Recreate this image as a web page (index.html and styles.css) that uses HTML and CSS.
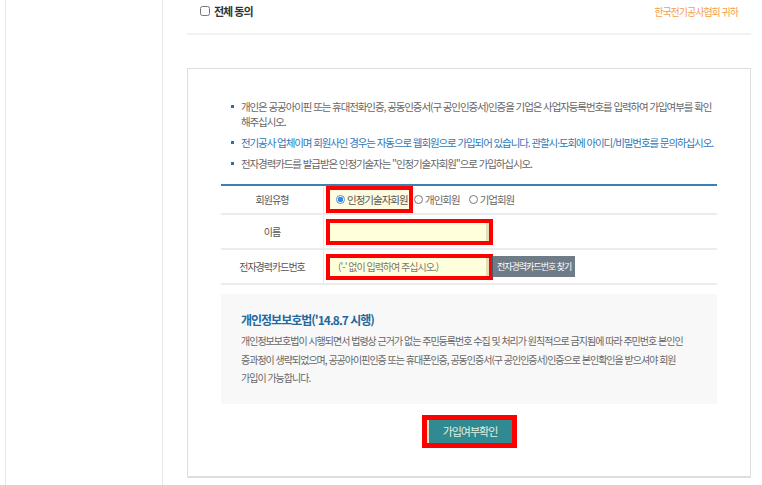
FILE: index.html
```html
<!DOCTYPE html>
<html lang="ko">

<head>
    <meta charset="UTF-8">
    <meta name="viewport" content="width=device-width, initial-scale=1.0">
    <title>가입여부확인</title>
    <link rel="stylesheet" href="styles.css">
</head>

<body>
    <div class="page">
        <div class="sidebar"></div>
        <div class="main">
            <div class="agree-row">
                <label class="agree-all"><input type="checkbox"> 전체 동의</label>
                <span class="to">한국전기공사협회 귀하</span>
            </div>

            <div class="box">
                <ul class="notice">
                    <li>개인은 공공아이핀 또는 휴대전화인증, 공동인증서(구 공인인증서)인증을 기업은 사업자등록번호를 입력하여 가입여부를 확인<br>해주십시오.</li>
                    <li class="blue">전기공사 업체이며 회원사인 경우는 자동으로 웹회원으로 가입되어 있습니다. 관할시·도회에 아이디/비밀번호를 문의하십시오.</li>
                    <li>전자경력카드를 발급받은 인정기술자는 "인정기술자회원"으로 가입하십시오.</li>
                </ul>

                <table class="form-table">
                    <tr class="row-type">
                        <th>회원유형</th>
                        <td>
                            <div class="radios">
                                <label class="radio mark checked"><span class="dot"></span>인정기술자회원</label>
                                <label class="radio"><span class="dot"></span>개인회원</label>
                                <label class="radio"><span class="dot"></span>기업회원</label>
                            </div>
                        </td>
                    </tr>
                    <tr>
                        <th>이름</th>
                        <td>
                            <div class="mark field"><input type="text" class="input"></div>
                        </td>
                    </tr>
                    <tr>
                        <th>전자경력카드번호</th>
                        <td>
                            <div class="with-btn">
                                <div class="mark field"><input type="text" class="input" placeholder="('-' 없이 입력하여 주십시오.)"></div>
                                <button class="btn-find">전자경력카드번호 찾기</button>
                            </div>
                        </td>
                    </tr>
                </table>

                <div class="privacy">
                    <h3>개인정보보호법('14.8.7 시행)</h3>
                    <p>개인정보보호법이 시행되면서 법령상 근거가 없는 주민등록번호 수집 및 처리가 원칙적으로 금지됨에 따라 주민번호 본인인<br>증과정이 생략되었으며, 공공아이핀인증 또는 휴대폰인증, 공동인증서(구 공인인증서)인증으로 본인확인을 받으셔야 회원<br>가입이 가능합니다.</p>
                </div>

                <div class="actions">
                    <div class="mark btn-wrap"><button class="btn-check">가입여부확인</button></div>
                </div>
            </div>
        </div>
    </div>
</body>

</html>
```

FILE: styles.css
```css
body {
    margin: 0;
    padding: 0;
    background: #fff;
    font-family: "Noto Sans CJK KR", "Noto Sans", sans-serif;
    font-size: 10px;
    letter-spacing: -1px;
    color: #666;
}

.page {
    display: flex;
    height: 485px;
    overflow: hidden;
}

.sidebar {
    width: 156px;
    margin-left: 5px;
    border-left: 1px solid #e6e6e6;
    border-right: 1px solid #e6e6e6;
}

.main {
    width: 564px;
    margin-left: 24px;
}

.agree-row {
    display: flex;
    align-items: center;
    justify-content: space-between;
    padding: 0 13px 11px;
    border-bottom: 2px solid #f2f2f2;
    box-sizing: border-box;
    height: 35px;
}

.agree-all {
    display: flex;
    align-items: center;
    font-weight: bold;
    color: #333;
    font-size: 11px;
}

.agree-all input {
    width: 10px;
    height: 10px;
    margin: 0 4px 0 0;
}

.to {
    color: #f5a04a;
}

.box {
    margin-top: 33px;
    border: 1px solid #dedede;
    border-bottom-width: 2px;
    padding: 30px 33px 28px;
}

.notice {
    list-style: none;
    margin: 0;
    padding: 0 0 0 20px;
    line-height: 15px;
    font-size: 10.5px;
    letter-spacing: -1.1px;
}

.notice li {
    position: relative;
    margin-bottom: 6px;
}

.notice li::before {
    content: "";
    position: absolute;
    left: -10px;
    top: 6px;
    width: 3px;
    height: 3px;
    background: #2d6db5;
}

.notice .blue {
    color: #2c78b9;
}

.form-table {
    width: 100%;
    margin-top: 13px;
    border-collapse: collapse;
    border-top: 2px solid #3d7fb2;
}

.form-table th {
    width: 100px;
    font-weight: normal;
    color: #555;
    border-right: 1px solid #e6e6e6;
    border-bottom: 2px solid #ececec;
    height: 31px;
}

.form-table td {
    border-bottom: 2px solid #ececec;
    padding: 0 0 0 2px;
}

.row-type th,
.row-type td {
    height: 27px;
    padding-top: 0;
    padding-bottom: 0;
}

.radios {
    display: flex;
    align-items: center;
    gap: 1px;
    font-size: 10.5px;
}

.radio {
    display: flex;
    align-items: center;
    gap: 2px;
}

.radio:last-child {
    margin-left: 8px;
}

.dot {
    width: 9px;
    height: 9px;
    border: 1px solid #777;
    border-radius: 50%;
    background: #fff;
    box-sizing: border-box;
}

.mark {
    border: 4px solid #f00;
    box-sizing: border-box;
}

.radio.mark {
    height: 27px;
    width: 87px;
    padding-left: 6px;
    background: #fdfbe0;
    color: #555;
}

.checked .dot {
    border-color: #4a8fd8;
    background: radial-gradient(circle, #3d86d8 0 2.5px, #fff 3px);
}

.field {
    width: 167px;
    height: 26px;
}

.input {
    display: block;
    width: 100%;
    height: 100%;
    box-sizing: border-box;
    border: none;
    border-right: 3px solid #e2e0b8;
    background: #ffffdc;
    padding: 0 8px;
    font-family: inherit;
    font-size: 10px;
    letter-spacing: -1px;
    color: #666;
    outline: none;
}

.input::placeholder {
    color: #777;
}

.with-btn {
    display: flex;
    align-items: center;
}

.btn-find {
    height: 21px;
    padding: 0 4px;
    margin-left: -2px;
    border: none;
    border-left: 2px solid #4a5560;
    background: #6f7b87;
    color: #fff;
    font-family: inherit;
    font-size: 9px;
    letter-spacing: -1px;
}

.privacy {
    margin-top: 9px;
    background: #f8f8f8;
    padding: 18px 20px 16px;
}

.privacy h3 {
    margin: 0;
    font-size: 12px;
    line-height: 16px;
    color: #23689f;
}

.privacy p {
    margin: 4px 0 0;
    line-height: 18.5px;
}

.actions {
    display: flex;
    justify-content: center;
    margin-top: 11px;
}

.btn-wrap {
    border-width: 5px;
}

.btn-check {
    display: block;
    width: 85px;
    height: 23px;
    border: none;
    border-left: 2px solid #e6e8c4;
    background: #318a92;
    color: #e6f0dc;
    font-family: inherit;
    font-size: 11px;
    letter-spacing: -1px;
}
```
